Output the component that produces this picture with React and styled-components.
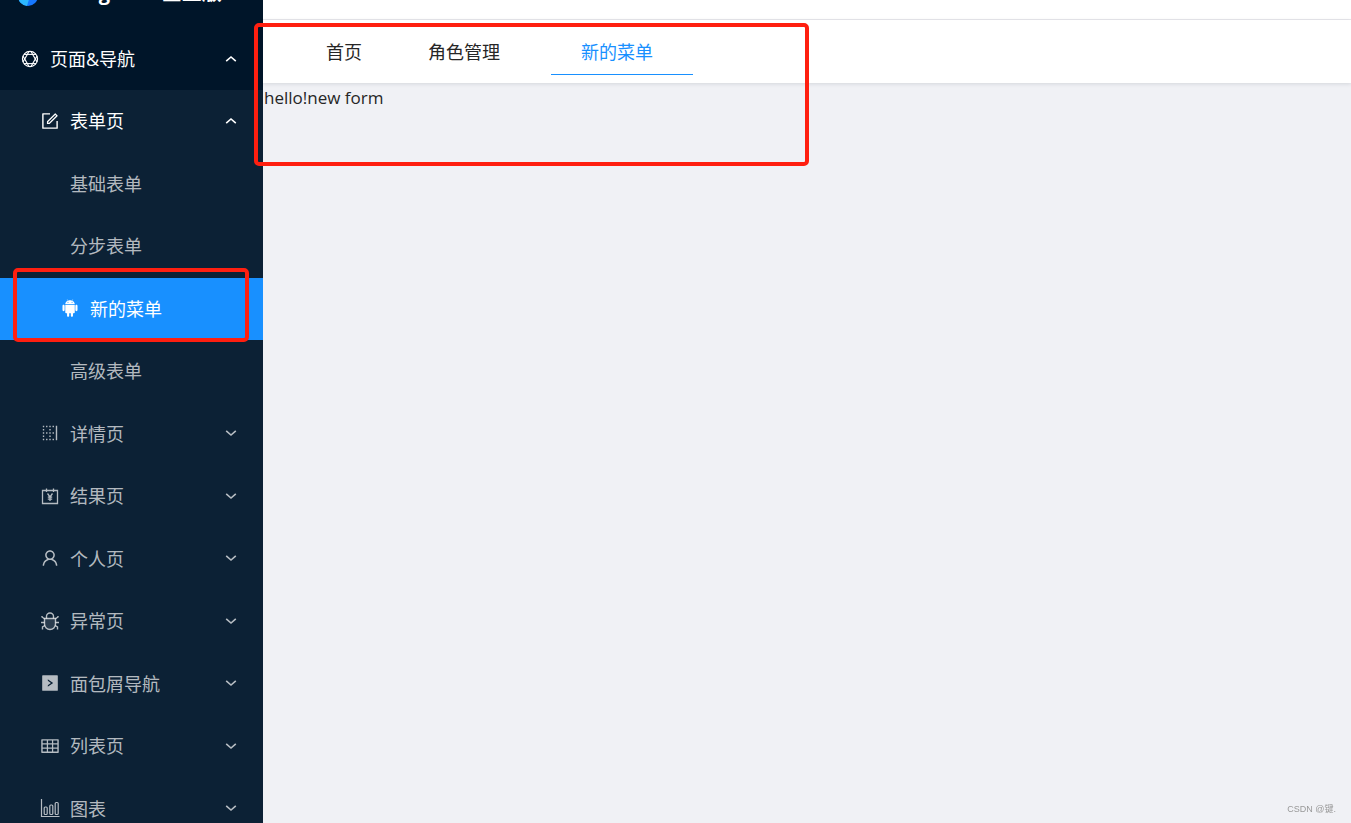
import React, { useState } from 'react';
import styled, { createGlobalStyle } from 'styled-components';
import {
  AiFillAndroid,
  AiFillRightSquare,
  AiOutlineBorderRight,
  AiOutlineForm,
  AiOutlineTable,
  AiOutlineUser,
} from 'react-icons/ai';

const GlobalStyle = createGlobalStyle`
  * {
    box-sizing: border-box;
  }

  body {
    margin: 0;
    background: #f0f1f5;
    color: #262626;
    font-family: 'Open Sans', 'Noto Sans CJK SC', sans-serif;
    font-size: 18px;
  }
`;

const Layout = styled.div`
  display: flex;
  height: 100vh;
  overflow: hidden;
`;

const Sidebar = styled.aside`
  flex: 0 0 263px;
  background: #0c2135;
  color: #fff;
`;

const Brand = styled.div`
  display: flex;
  align-items: flex-end;
  gap: 12px;
  height: 28px;
  padding: 0 18px 22px;
  background: #001529;
  font-size: 20px;
  font-weight: 700;
  line-height: 27px;
  white-space: nowrap;

  svg {
    flex: none;
  }
`;

const Menu = styled.ul`
  display: grid;
  grid-auto-rows: 1fr;
  min-height: 750px;
  margin: 0;
  padding: 0;
  list-style: none;
`;

const MenuRow = styled.li`
  position: relative;
  display: flex;
`;

const MenuButton = styled.button`
  display: flex;
  align-items: center;
  gap: 10px;
  width: 100%;
  min-height: 62px;
  padding: 0 26px 0 ${props => props.$indent}px;
  border: none;
  background: ${props => props.$background || 'transparent'};
  color: ${props => (props.$bright ? '#fff' : 'rgba(255, 255, 255, 0.7)')};
  font: inherit;
  text-align: left;
  cursor: pointer;

  &:hover {
    color: #fff;
  }
`;

const IconSlot = styled.span`
  display: flex;
  justify-content: center;
  flex: 0 0 20px;
  margin-bottom: 1px;
`;

const Label = styled.span`
  flex: 1;
  line-height: 24px;
`;

const Chevron = styled.svg`
  margin-bottom: 1px;
  transform: ${props => (props.$open ? 'rotate(180deg)' : 'none')};
`;

const Main = styled.main`
  position: relative;
  flex: 1;
  min-width: 0;
`;

const TopBar = styled.header`
  height: 20px;
  background: #fff;
  border-bottom: 1px solid #e8e8ec;
`;

const TabBar = styled.nav`
  display: flex;
  gap: 11px;
  height: 63px;
  padding: 8px 33px;
  background: #fff;
  box-shadow: 0 1px 4px rgba(0, 21, 41, 0.12);
`;

const Tab = styled.button`
  padding: 0 ${props => (props.$closable ? 40 : 25)}px 0 30px;
  border: none;
  border-bottom: 1px solid ${props => (props.$active ? '#1890ff' : 'transparent')};
  background: none;
  color: ${props => (props.$active ? '#1890ff' : '#262626')};
  font: inherit;
  cursor: pointer;
`;

const Content = styled.p`
  margin: 0;
  padding: 2px 1px;
  font-size: 17px;
  line-height: 26px;
`;

const Marker = styled.div`
  position: absolute;
  border: 4px solid #ff1f10;
  border-radius: 5px;
  pointer-events: none;
`;

const RowMarker = styled(Marker)`
  inset: -10px 14px -2px 13px;
  z-index: 1;
`;

const TabMarker = styled(Marker)`
  top: 23px;
  left: -9px;
  width: 555px;
  height: 143px;
`;

const Watermark = styled.span`
  position: fixed;
  right: 15px;
  bottom: 7px;
  color: #999;
  font-family: 'Liberation Sans', 'Noto Sans CJK SC', sans-serif;
  font-size: 9px;
  line-height: 14px;
`;

const Logo = () => (
  <svg width="20" height="20" viewBox="0 0 20 20" aria-hidden="true">
    <circle cx="10" cy="10" r="10" fill="#1677ff" />
    <path d="M2 4 L12 10 L9 20 A10 10 0 0 1 0 10 Z" fill="#2db7ff" />
  </svg>
);

const ApertureIcon = () => (
  <svg width="18" height="18" viewBox="0 0 18 18" fill="none" stroke="currentColor" strokeWidth="1.1">
    <circle cx="9" cy="9" r="7.6" />
    {[0, 60, 120, 180, 240, 300].map(angle => (
      <path key={angle} d="M3 4.4 H15" transform={`rotate(${angle} 9 9)`} />
    ))}
  </svg>
);

const YuanIcon = () => (
  <svg width="18" height="18" viewBox="0 0 18 18" fill="none" stroke="currentColor" strokeWidth="1.3">
    <path d="M1.5 3.5 H16.5 V16.5 H1.5 Z M5.5 1.5 V5 M12.5 1.5 V5" />
    <path d="M6.5 6.5 L9 10 L11.5 6.5 M9 10 V14 M6.8 10.2 H11.2 M6.8 12.2 H11.2" />
  </svg>
);

const BugIcon = () => (
  <svg width="20" height="20" viewBox="0 0 20 20" fill="none" stroke="currentColor" strokeWidth="1.4">
    <path d="M4.5 7.5 H15.5 V13 A5.5 5.5 0 0 1 4.5 13 Z" fill="currentColor" fillOpacity="0.18" />
    <path d="M6.5 7.5 V5.5 A3.5 3.5 0 0 1 13.5 5.5 V7.5 M1 11.5 H4.5 M15.5 11.5 H19 M2 5 V6 L4.5 7.8 M18 5 V6 L15.5 7.8 M4.8 14.5 L2.5 16 V18.5 M15.2 14.5 L17.5 16 V18.5" />
  </svg>
);

const ChartIcon = () => (
  <svg width="20" height="20" viewBox="0 0 20 20" fill="none" stroke="currentColor" strokeWidth="1.2">
    <path d="M1.5 1 V18.5 H19.5" />
    <rect x="4.2" y="9" width="3" height="7.5" rx="1" />
    <rect x="9.8" y="7" width="3" height="9.5" rx="1" />
    <rect x="15.2" y="4.5" width="3" height="12" rx="1" />
  </svg>
);

const Arrow = ({ open }) => (
  <Chevron $open={open} width="12" height="8" viewBox="0 0 12 8" fill="none" aria-hidden="true">
    <path d="M1.2 1.8 L6 6 L10.8 1.8" stroke="currentColor" strokeWidth="1.6" />
  </Chevron>
);

const menuItems = [
  { label: '表单页', indent: 40, icon: <AiOutlineForm size={20} />, arrow: true, open: true },
  { label: '基础表单', indent: 70 },
  { label: '分步表单', indent: 70 },
  { label: '新的菜单', indent: 60, icon: <AiFillAndroid size={20} />, marked: true },
  { label: '高级表单', indent: 70 },
  { label: '详情页', indent: 40, icon: <AiOutlineBorderRight size={20} />, arrow: true },
  { label: '结果页', indent: 40, icon: <YuanIcon />, arrow: true },
  { label: '个人页', indent: 40, icon: <AiOutlineUser size={20} />, arrow: true },
  { label: '异常页', indent: 40, icon: <BugIcon />, arrow: true },
  { label: '面包屑导航', indent: 40, icon: <AiFillRightSquare size={20} />, arrow: true },
  { label: '列表页', indent: 40, icon: <AiOutlineTable size={20} />, arrow: true },
  { label: '图表', indent: 40, icon: <ChartIcon />, arrow: true },
];

const tabs = [
  { label: '首页' },
  { label: '角色管理', closable: true },
  { label: '新的菜单', closable: true },
];

const App = () => {
  const [active, setActive] = useState('新的菜单');

  return (
    <Layout>
      <GlobalStyle />
      <Sidebar>
        <Brand>
          <Logo />
          iDesign Kit 企业版
        </Brand>
        <MenuButton $indent={20} $background="#001529" $bright aria-expanded="true">
          <IconSlot><ApertureIcon /></IconSlot>
          <Label>页面&amp;导航</Label>
          <Arrow open />
        </MenuButton>
        <Menu>
          {menuItems.map(item => (
            <MenuRow key={item.label}>
              <MenuButton
                $indent={item.indent}
                $background={item.label === active ? '#1890ff' : undefined}
                $bright={item.open || item.label === active}
                aria-expanded={item.arrow ? Boolean(item.open) : undefined}
              >
                {item.icon && <IconSlot>{item.icon}</IconSlot>}
                <Label>{item.label}</Label>
                {item.arrow && <Arrow open={item.open} />}
              </MenuButton>
              {item.marked && <RowMarker />}
            </MenuRow>
          ))}
        </Menu>
      </Sidebar>
      <Main>
        <TopBar />
        <TabBar>
          {tabs.map(tab => (
            <Tab
              key={tab.label}
              type="button"
              $active={tab.label === active}
              $closable={tab.closable}
              onClick={() => setActive(tab.label)}
            >
              {tab.label}
            </Tab>
          ))}
        </TabBar>
        <Content>hello!new form</Content>
        <TabMarker />
      </Main>
      <Watermark>CSDN @键.</Watermark>
    </Layout>
  );
};

export default App;
